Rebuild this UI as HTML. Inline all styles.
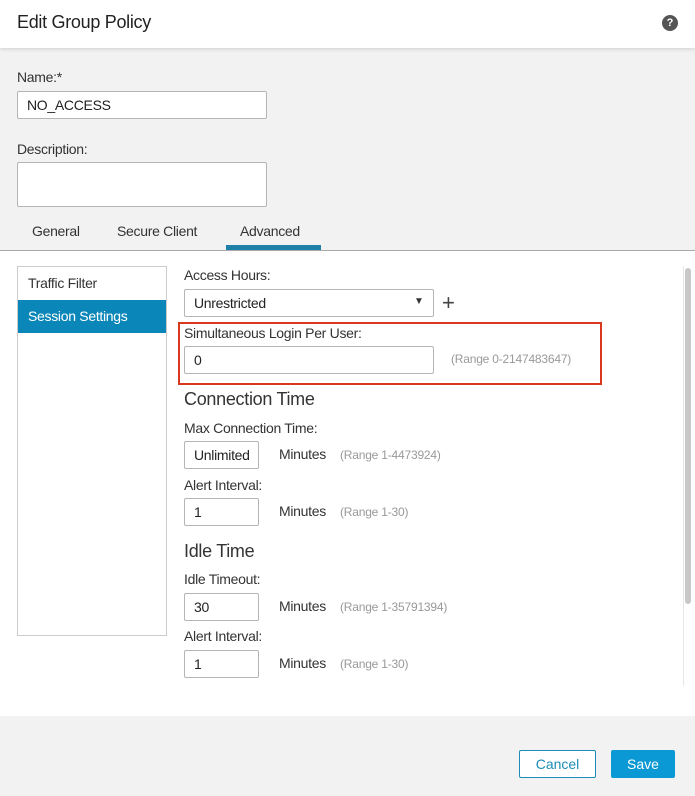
<!DOCTYPE html>
<html><head><style>
*{margin:0;padding:0;box-sizing:border-box}
body{width:695px;height:796px;position:relative;background:#fff;font-family:"Liberation Sans",sans-serif;color:#333;overflow:hidden;font-size:14px}
.a{position:absolute;white-space:nowrap}
.inp{position:absolute;background:#fff;border:1px solid #b5b5b5;border-radius:2px;padding-left:9px;font-size:14px;color:#222;display:flex;align-items:center;letter-spacing:-0.3px}
.lbl{position:absolute;font-size:14px;color:#333;letter-spacing:-0.3px;white-space:nowrap}
.min{position:absolute;font-size:14px;color:#333;letter-spacing:-0.3px}
.rng{position:absolute;font-size:12px;color:#999;letter-spacing:-0.2px;white-space:nowrap}
h3{position:absolute;font-weight:normal;font-size:18px;color:#333;letter-spacing:-0.3px}
</style></head><body>
<div class="a" style="left:0;top:0;width:695px;height:48px;background:#fff;box-shadow:0 1px 4px rgba(0,0,0,.15);z-index:2"></div>
<div class="a" style="left:17px;top:12px;font-size:18px;color:#222;z-index:3;letter-spacing:-0.3px">Edit Group Policy</div>
<div class="a" style="left:662px;top:15px;width:16px;height:16px;border-radius:50%;background:#555;color:#fff;font-size:11px;font-weight:bold;text-align:center;line-height:16px;z-index:3">?</div>
<div class="a" style="left:0;top:48px;width:695px;height:202px;background:#f2f2f2"></div>
<div class="lbl" style="left:17px;top:69px">Name:*</div>
<div class="inp" style="left:17px;top:91px;width:250px;height:28px">NO_ACCESS</div>
<div class="lbl" style="left:17px;top:141px">Description:</div>
<div class="inp" style="left:17px;top:162px;width:250px;height:45px"></div>
<div class="lbl" style="left:32px;top:223px">General</div>
<div class="lbl" style="left:117px;top:223px">Secure Client</div>
<div class="lbl" style="left:240px;top:223px">Advanced</div>
<div class="a" style="left:226px;top:245px;width:95px;height:5px;background:#1e7fa8"></div>
<div class="a" style="left:0;top:250px;width:695px;height:1px;background:#aaa"></div>
<div class="a" style="left:17px;top:266px;width:150px;height:370px;border:1px solid #ccc;background:#fff"></div>
<div class="lbl" style="left:28px;top:275px">Traffic Filter</div>
<div class="a" style="left:18px;top:300px;width:148px;height:33px;background:#0a87b8"></div>
<div class="lbl" style="left:28px;top:308px;color:#fff">Session Settings</div>
<div class="lbl" style="left:184px;top:267px">Access Hours:</div>
<div class="inp" style="left:184px;top:289px;width:250px;height:28px">Unrestricted</div>
<div class="a" style="left:414px;top:296px;font-size:10px;color:#333">▼</div>
<div class="a" style="left:442px;top:290px;font-size:22px;color:#444;font-weight:300">+</div>
<div class="a" style="left:178px;top:322px;width:424px;height:63px;border:2px solid #d9381e"></div>
<div class="lbl" style="left:184px;top:325px">Simultaneous Login Per User:</div>
<div class="inp" style="left:184px;top:346px;width:250px;height:28px">0</div>
<div class="rng" style="left:451px;top:352px">(Range 0-2147483647)</div>
<h3 style="left:184px;top:389px">Connection Time</h3>
<div class="lbl" style="left:184px;top:420px">Max Connection Time:</div>
<div class="inp" style="left:184px;top:441px;width:75px;height:28px;overflow:hidden"><span style="display:block;width:58px;overflow:hidden">Unlimited</span></div>
<div class="min" style="left:279px;top:446px">Minutes</div>
<div class="rng" style="left:340px;top:448px">(Range 1-4473924)</div>
<div class="lbl" style="left:184px;top:477px">Alert Interval:</div>
<div class="inp" style="left:184px;top:498px;width:75px;height:28px">1</div>
<div class="min" style="left:279px;top:503px">Minutes</div>
<div class="rng" style="left:340px;top:505px">(Range 1-30)</div>
<h3 style="left:184px;top:541px">Idle Time</h3>
<div class="lbl" style="left:184px;top:571px">Idle Timeout:</div>
<div class="inp" style="left:184px;top:593px;width:75px;height:28px">30</div>
<div class="min" style="left:279px;top:598px">Minutes</div>
<div class="rng" style="left:340px;top:600px">(Range 1-35791394)</div>
<div class="lbl" style="left:184px;top:628px">Alert Interval:</div>
<div class="inp" style="left:184px;top:650px;width:75px;height:28px">1</div>
<div class="min" style="left:279px;top:655px">Minutes</div>
<div class="rng" style="left:340px;top:657px">(Range 1-30)</div>
<div class="a" style="left:683px;top:266px;width:1px;height:420px;background:#e6e6e6"></div>
<div class="a" style="left:685px;top:268px;width:6px;height:336px;border-radius:3px;background:#c8c8c8"></div>
<div class="a" style="left:0;top:716px;width:695px;height:80px;background:#f2f2f2"></div>
<div class="a" style="left:519px;top:750px;width:77px;height:28px;border:1px solid #1e8cb8;border-radius:2px;background:#fff;color:#1e8cb8;text-align:center;line-height:26px;font-size:14px">Cancel</div>
<div class="a" style="left:611px;top:750px;width:64px;height:28px;border-radius:2px;background:#0a99d4;color:#fff;text-align:center;line-height:28px;font-size:14px">Save</div>
</body></html>
